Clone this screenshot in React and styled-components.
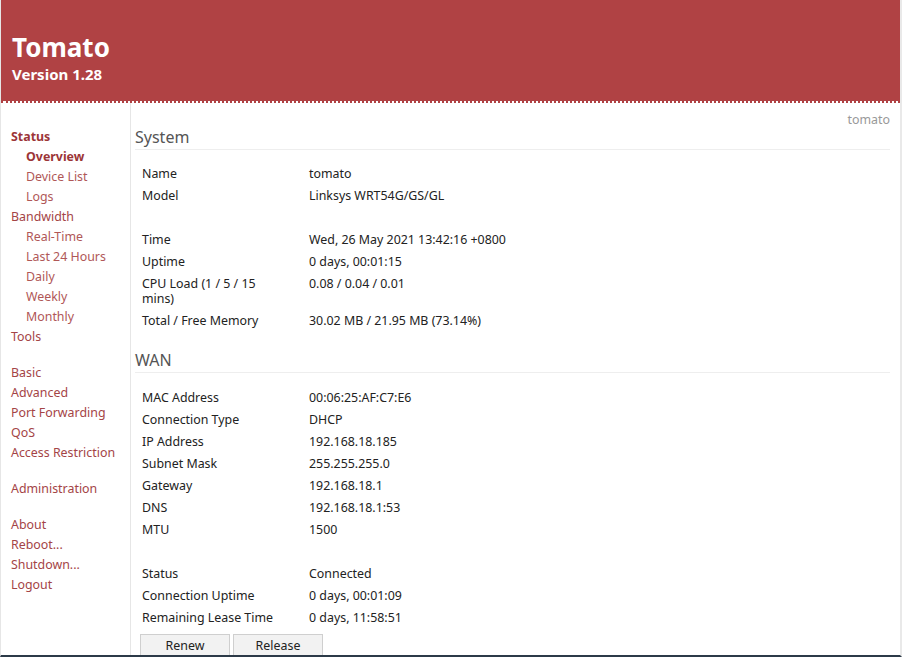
import React from 'react';
import styled, { createGlobalStyle } from 'styled-components';

const GlobalStyle = createGlobalStyle`
  html, body {
    margin: 0;
    padding: 0;
    background: #fff;
    overflow: hidden;
  }
  body {
    font-family: "Noto Sans", "Open Sans", sans-serif;
    font-size: 12.4px;
    color: #222;
  }
`

const Frame = styled.div`
  height: 655px;
  overflow: hidden;
  border-left: 1px solid #e6e6e6;
  border-right: 2px solid #e9e9e9;
  border-bottom: 2px solid #2c3a48;
  display: flex;
  flex-direction: column;
`

const Header = styled.header`
  background-color: #b04244;
  border-bottom: 2px dotted #b04244;
  background-clip: padding-box;
  padding: 0 11px 17px;
  box-sizing: border-box;
  color: #fff;
  display: flex;
  flex-direction: column;
  justify-content: flex-end;
  height: 103px;
  flex-shrink: 0;
`

const Title = styled.h1`
  margin: 0 0 1px;
  font-size: 26px;
  line-height: 32px;
  font-weight: bold;
`

const Version = styled.div`
  font-size: 15px;
  line-height: 20px;
  font-weight: bold;
`

const Body = styled.div`
  display: flex;
  flex: 1;
  min-height: 0;
`

const Sidebar = styled.nav`
  width: 130px;
  flex-shrink: 0;
  border-right: 1px solid #e6e6e6;
  padding: 24px 0 0 10px;
  box-sizing: border-box;
`

const NavItem = styled.a`
  display: block;
  line-height: 20px;
  color: ${p => (p.$sub ? '#b05757' : '#a44446')};
  font-weight: ${p => (p.$active ? 'bold' : 'normal')};
  padding-left: ${p => (p.$sub ? '15px' : '0')};
  margin-top: ${p => (p.$gap ? '16px' : '0')};
  text-decoration: none;
  white-space: nowrap;
  cursor: pointer;
  ${p => p.$active && 'color: #9c3537;'}
`

const Main = styled.main`
  flex: 1;
  padding: 9px 10px 0 4px;
`

const HostName = styled.div`
  text-align: right;
  color: #999;
  line-height: 16px;
`

const Section = styled.section`
  margin-bottom: 19px;
`

const Heading = styled.h2`
  margin: 0;
  font-size: 16px;
  font-weight: normal;
  color: #555;
  line-height: 18px;
  padding-bottom: 3px;
  border-bottom: 1px solid #eee;
`

const Table = styled.div`
  margin-top: ${p => (p.$tight ? '14px' : '13px')};
`

const Row = styled.div`
  display: flex;
  min-height: 22px;
`

const Label = styled.div`
  width: 140px;
  padding: 3px 27px 4px 7px;
  line-height: 15px;
  flex-shrink: 0;
`

const Value = styled.div`
  padding: 3px 0 4px;
  line-height: 15px;
`

const Buttons = styled.div`
  display: flex;
  gap: 3px;
  margin-top: 5px;
  padding-left: 5px;
`

const Button = styled.button`
  width: 90px;
  height: 22px;
  font-family: inherit;
  font-size: 12.4px;
  color: #222;
  background: #f2f2f2;
  border: 1px solid #cfcfcf;
  padding: 0;
`

const nav = [
  { label: 'Status', active: true },
  { label: 'Overview', sub: true, active: true },
  { label: 'Device List', sub: true },
  { label: 'Logs', sub: true },
  { label: 'Bandwidth' },
  { label: 'Real-Time', sub: true },
  { label: 'Last 24 Hours', sub: true },
  { label: 'Daily', sub: true },
  { label: 'Weekly', sub: true },
  { label: 'Monthly', sub: true },
  { label: 'Tools' },
  { label: 'Basic', gap: true },
  { label: 'Advanced' },
  { label: 'Port Forwarding' },
  { label: 'QoS' },
  { label: 'Access Restriction' },
  { label: 'Administration', gap: true },
  { label: 'About', gap: true },
  { label: 'Reboot...' },
  { label: 'Shutdown...' },
  { label: 'Logout' },
]

const system = [
  ['Name', 'tomato'],
  ['Model', 'Linksys WRT54G/GS/GL'],
  [null],
  ['Time', 'Wed, 26 May 2021 13:42:16 +0800'],
  ['Uptime', '0 days, 00:01:15'],
  ['CPU Load (1 / 5 / 15 mins)', '0.08 / 0.04 / 0.01'],
  ['Total / Free Memory', '30.02 MB / 21.95 MB (73.14%)'],
]

const wan = [
  ['MAC Address', '00:06:25:AF:C7:E6'],
  ['Connection Type', 'DHCP'],
  ['IP Address', '192.168.18.185'],
  ['Subnet Mask', '255.255.255.0'],
  ['Gateway', '192.168.18.1'],
  ['DNS', '192.168.18.1:53'],
  ['MTU', '1500'],
  [null],
  ['Status', 'Connected'],
  ['Connection Uptime', '0 days, 00:01:09'],
  ['Remaining Lease Time', '0 days, 11:58:51'],
]

const Rows = ({ rows, tight }) => (
  <Table $tight={tight}>
    {rows.map(([label, value], i) => (
      <Row key={i}>
        <Label>{label}</Label>
        <Value>{value}</Value>
      </Row>
    ))}
  </Table>
)

export default function App() {
  return (
    <Frame>
      <GlobalStyle />
      <Header>
        <Title>Tomato</Title>
        <Version>Version 1.28</Version>
      </Header>
      <Body>
        <Sidebar>
          {nav.map(item => (
            <NavItem key={item.label} $sub={item.sub} $active={item.active} $gap={item.gap}>
              {item.label}
            </NavItem>
          ))}
        </Sidebar>
        <Main>
          <HostName>tomato</HostName>
          <Section>
            <Heading>System</Heading>
            <Rows rows={system} />
          </Section>
          <Section>
            <Heading>WAN</Heading>
            <Rows rows={wan} tight />
            <Buttons>
              <Button>Renew</Button>
              <Button>Release</Button>
            </Buttons>
          </Section>
        </Main>
      </Body>
    </Frame>
  );
}
